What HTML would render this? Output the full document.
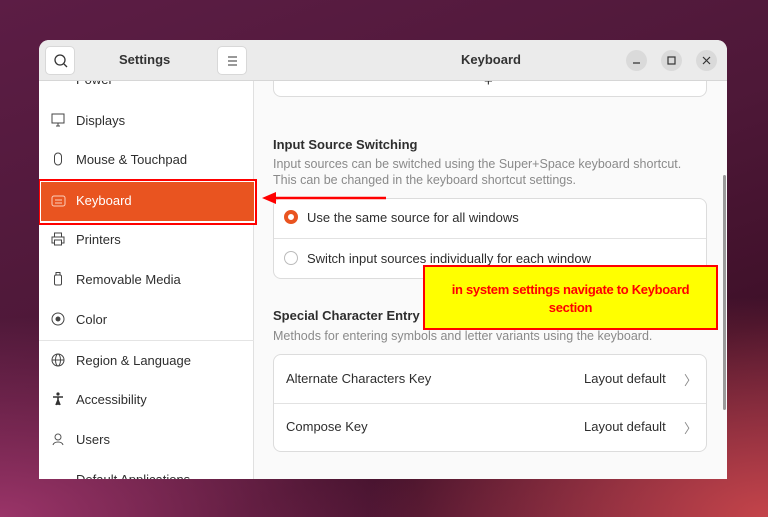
<!DOCTYPE html>
<html><head><style>
*{margin:0;padding:0;box-sizing:border-box}
body{width:768px;height:517px;overflow:hidden;font-family:"Liberation Sans",sans-serif;position:relative;
background:
radial-gradient(ellipse 420px 200px at 0% 100%,#9a3468 0%,rgba(154,52,104,0) 100%),
radial-gradient(ellipse 400px 220px at 100% 100%,#c4444a 0%,rgba(196,68,74,0) 100%),
linear-gradient(160deg,#5c1d45 0%,#4e1838 45%,#3f1029 75%,#5a1a3a 100%);}
.win{position:absolute;left:39px;top:40px;width:688px;height:439px;background:#fafafa;border-radius:10px 10px 0 0;overflow:hidden}
.hd{position:absolute;left:0;top:0;width:688px;height:41px;background:#ebebeb;border-bottom:1px solid #d6d6d6;z-index:5}
.side{position:absolute;left:0;top:41px;width:215px;height:398px;background:#fff;border-right:1px solid #e0e0e0}
.btn{position:absolute;top:6px;width:30px;height:29px;background:#fff;border:1px solid #d8d8d8;border-radius:5px}
.t{position:absolute;font-size:13px;color:#2e2e2e;white-space:nowrap}
.it{position:absolute;left:37px;font-size:13px;color:#2e2e2e}
.ic{position:absolute;left:12px;width:14px;height:14px}
.cb{position:absolute;left:234px;width:434px;background:#fff;border:1px solid #dcdcdc;border-radius:8px}
.g{color:#8a8a8a}
.wb{position:absolute;top:10px;width:21px;height:21px;border-radius:50%;background:#dadada}
</style></head><body>
<div class="win">
 <div class="hd">
  <div class="btn" style="left:6px"><svg width="30" height="29"><circle cx="14" cy="13" r="5" fill="none" stroke="#333" stroke-width="1.3"/><path d="M18 17l3 3" stroke="#333" stroke-width="1.3"/></svg></div>
  <div class="t" style="left:80px;top:12px;font-weight:bold;color:#333">Settings</div>
  <div class="btn" style="left:178px"><svg width="30" height="29"><path d="M10 10h9M10 14h9M10 18h9" stroke="#333" stroke-width="1.1"/></svg></div>
  <div class="t" style="left:422px;top:12px;font-weight:bold;color:#333">Keyboard</div>
  <div class="wb" style="left:587px"><svg width="21" height="21"><path d="M7 13h7" stroke="#333" stroke-width="1.2"/></svg></div>
  <div class="wb" style="left:622px"><svg width="21" height="21"><rect x="7" y="7" width="7" height="7" fill="none" stroke="#333" stroke-width="1.2"/></svg></div>
  <div class="wb" style="left:657px"><svg width="21" height="21"><path d="M7 7l7 7M14 7l-7 7" stroke="#333" stroke-width="1.2"/></svg></div>
 </div>
 <div class="side">
  <div class="it" style="top:-9px">Power</div>
  <div class="it" style="top:32px">Displays</div>
  <svg class="ic" style="top:32px" viewBox="0 0 14 14"><rect x="1" y="1" width="12" height="9" fill="none" stroke="#444"/><path d="M5 13h4M7 10v3" stroke="#444"/></svg>
  <div class="it" style="top:71px">Mouse &amp; Touchpad</div>
  <svg class="ic" style="top:71px" viewBox="0 0 14 14"><rect x="3.5" y="1" width="7" height="12" rx="3.5" fill="none" stroke="#444"/></svg>
  <div class="it" style="top:151px">Printers</div>
  <svg class="ic" style="top:151px" viewBox="0 0 14 14"><rect x="1" y="5" width="12" height="6" fill="none" stroke="#444"/><rect x="3.5" y="1" width="7" height="4" fill="none" stroke="#444"/><rect x="3.5" y="8" width="7" height="5" fill="#fff" stroke="#444"/></svg>
  <div class="it" style="top:191px">Removable Media</div>
  <svg class="ic" style="top:191px" viewBox="0 0 14 14"><rect x="3.5" y="3" width="7" height="10" rx="1.5" fill="none" stroke="#444"/><rect x="5" y="0.5" width="4" height="2.5" fill="none" stroke="#444"/></svg>
  <div class="it" style="top:231px">Color</div>
  <svg class="ic" style="top:231px" viewBox="0 0 14 14"><circle cx="7" cy="7" r="6" fill="none" stroke="#444"/><circle cx="7" cy="7" r="2.5" fill="#444"/></svg>
  <div style="position:absolute;left:0;top:259px;width:215px;height:1px;background:#e4e4e4"></div>
  <div class="it" style="top:272px">Region &amp; Language</div>
  <svg class="ic" style="top:272px" viewBox="0 0 14 14"><circle cx="7" cy="7" r="6" fill="none" stroke="#444"/><ellipse cx="7" cy="7" rx="2.5" ry="6" fill="none" stroke="#444"/><path d="M1 7h12" stroke="#444"/></svg>
  <div class="it" style="top:311px">Accessibility</div>
  <svg class="ic" style="top:311px" viewBox="0 0 14 14"><circle cx="7" cy="2" r="1.6" fill="#333"/><path d="M2 5h10M7 5v8M5 13l2-5 2 5" stroke="#333" stroke-width="1.6" fill="none"/></svg>
  <div class="it" style="top:351px">Users</div>
  <svg class="ic" style="top:351px" viewBox="0 0 14 14"><circle cx="7" cy="5" r="3" fill="none" stroke="#555"/><path d="M2 13c1-4 9-4 10 0" fill="none" stroke="#555"/></svg>
  <div class="it" style="top:391px">Default Applications</div>
 </div>
 <div style="position:absolute;left:-1px;top:139px;width:219px;height:46px;border:2px solid #ff0000;background:#fff"></div>
 <div style="position:absolute;left:2px;top:142px;width:213px;height:39px;background:#e95420"></div>
 <svg style="position:absolute;left:12px;top:154px" width="15" height="14"><rect x="1" y="2" width="13" height="10" rx="2" fill="none" stroke="#fbd0bc"/><path d="M4 6h7M4 9h7" stroke="#fbd0bc"/></svg>
 <div class="t" style="left:37px;top:153px;color:#fff">Keyboard</div>

 <div class="cb" style="top:-10px;height:67px"></div>
 <div class="t" style="left:445px;top:33px;font-size:15px">+</div>
 <div class="t" style="left:234px;top:97px;font-weight:bold">Input Source Switching</div>
 <div class="t g" style="left:234px;top:117px;font-size:12.5px">Input sources can be switched using the Super+Space keyboard shortcut.</div>
 <div class="t g" style="left:234px;top:133px;font-size:12.5px">This can be changed in the keyboard shortcut settings.</div>
 <div class="cb" style="top:158px;height:81px"></div>
 <div style="position:absolute;left:235px;top:198px;width:432px;height:1px;background:#e2e2e2"></div>
 <div style="position:absolute;left:245px;top:170px;width:14px;height:14px;border-radius:50%;border:4px solid #e95420;background:#fff"></div>
 <div class="t" style="left:268px;top:170px">Use the same source for all windows</div>
 <div style="position:absolute;left:245px;top:211px;width:14px;height:14px;border-radius:50%;border:1px solid #bbb;background:#fff"></div>
 <div class="t" style="left:268px;top:211px">Switch input sources individually for each window</div>
 <div class="t" style="left:234px;top:268px;font-weight:bold">Special Character Entry</div>
 <div class="t g" style="left:234px;top:289px;font-size:12.5px">Methods for entering symbols and letter variants using the keyboard.</div>
 <div class="cb" style="top:314px;height:98px"></div>
 <div style="position:absolute;left:235px;top:363px;width:432px;height:1px;background:#e2e2e2"></div>
 <div class="t" style="left:247px;top:331px">Alternate Characters Key</div>
 <div class="t" style="left:545px;top:331px">Layout default</div>
 <div class="t g" style="left:645px;top:330px">〉</div>
 <div class="t" style="left:247px;top:379px">Compose Key</div>
 <div class="t" style="left:545px;top:379px">Layout default</div>
 <div class="t g" style="left:645px;top:378px">〉</div>
 <div style="position:absolute;left:684px;top:135px;width:3px;height:235px;background:#9a9a9a;border-radius:2px"></div>
</div>
<svg style="position:absolute;left:260px;top:190px" width="130" height="16"><path d="M14 8H126" stroke="#ff0000" stroke-width="2.5"/><path d="M2 8l14-6v12z" fill="#ff0000"/></svg>
<div style="position:absolute;left:423px;top:265px;width:295px;height:65px;background:#ffff00;border:2px solid #ff0000;color:#ff0000;font-weight:bold;font-size:13px;text-align:center;padding-top:14px;line-height:18px;letter-spacing:-0.3px">in system settings navigate to Keyboard<br>section</div>
</body></html>
